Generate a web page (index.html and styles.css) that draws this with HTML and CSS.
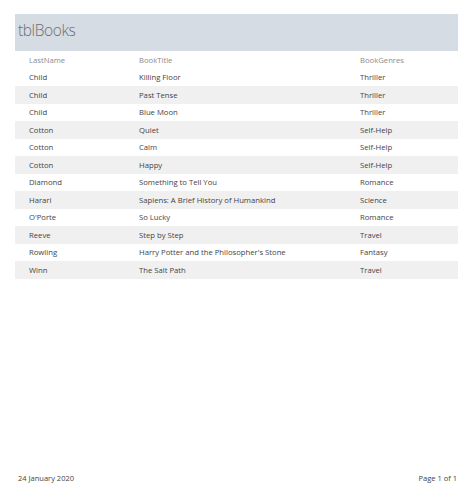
FILE: index.html
```html
<!DOCTYPE html>
<html>
<head>
<meta charset="utf-8">
<link rel="stylesheet" href="styles.css">
</head>
<body>
<div class="page">
  <div class="band"><span class="title">tblBooks</span></div>
  <div class="table">
    <div class="row head"><span>LastName</span><span>BookTitle</span><span>BookGenres</span></div>
    <div class="row"><span>Child</span><span>Killing Floor</span><span>Thriller</span></div>
    <div class="row alt"><span>Child</span><span>Past Tense</span><span>Thriller</span></div>
    <div class="row"><span>Child</span><span>Blue Moon</span><span>Thriller</span></div>
    <div class="row alt"><span>Cotton</span><span>Quiet</span><span>Self-Help</span></div>
    <div class="row"><span>Cotton</span><span>Calm</span><span>Self-Help</span></div>
    <div class="row alt"><span>Cotton</span><span>Happy</span><span>Self-Help</span></div>
    <div class="row"><span>Diamond</span><span>Something to Tell You</span><span>Romance</span></div>
    <div class="row alt"><span>Harari</span><span>Sapiens: A Brief History of Humankind</span><span>Science</span></div>
    <div class="row"><span>O'Porte</span><span>So Lucky</span><span>Romance</span></div>
    <div class="row alt"><span>Reeve</span><span>Step by Step</span><span>Travel</span></div>
    <div class="row"><span>Rowling</span><span>Harry Potter and the Philosopher's Stone</span><span>Fantasy</span></div>
    <div class="row alt"><span>Winn</span><span>The Salt Path</span><span>Travel</span></div>
  </div>
  <div class="footer"><span>24 January 2020</span><span>Page 1 of 1</span></div>
</div>
</body>
</html>
```
FILE: styles.css
```css
html, body {
  margin: 0;
  padding: 0;
  background: #ffffff;
}
.page {
  height: 501px;
  box-sizing: border-box;
  padding: 14px 16px 0 15px;
  display: flex;
  flex-direction: column;
  font-family: "Open Sans", "Liberation Sans", sans-serif;
}
.band {
  background: #d6dce4;
  height: 37px;
  display: flex;
  align-items: center;
  padding-left: 3px;
  padding-bottom: 5px;
  box-sizing: border-box;
}
.title {
  font-size: 15.5px;
  font-weight: 300;
  color: #6e6e6e;
  letter-spacing: -0.4px;
}
.table {
  display: flex;
  flex-direction: column;
}
.row {
  display: grid;
  grid-template-columns: 110px 221px 1fr;
  height: 17.5px;
  align-items: center;
  padding-left: 14px;
  font-size: 7.7px;
  color: #444444;
}
.row.head {
  color: #8c8c8c;
}
.row.alt {
  background: #f0f0f0;
}
.footer {
  margin-top: auto;
  margin-bottom: 18px;
  display: flex;
  justify-content: space-between;
  padding-left: 3px;
  padding-right: 1px;
  font-size: 7.5px;
  color: #444444;
}
```
